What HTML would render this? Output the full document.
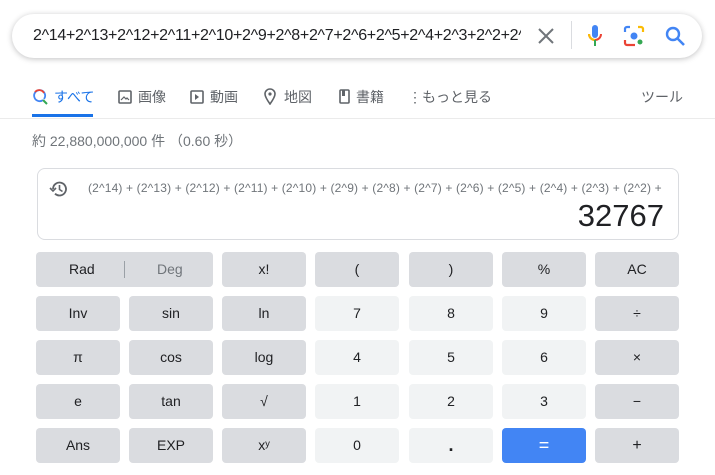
<html><head><style>
body{margin:0;width:715px;height:475px;background:#fff;font-family:"Liberation Sans","Noto Sans CJK JP",sans-serif;position:relative;overflow:hidden}
.a{position:absolute}
.sb{left:12px;top:14px;width:690px;height:44px;border-radius:22px;box-shadow:0 1px 6px rgba(32,33,36,.28);background:#fff}
.tab{top:87px;font-size:14px;color:#5f6368;line-height:20px}
.k{position:absolute;height:35px;border-radius:4px;background:#dadce0;color:#202124;font-size:14px;text-align:center;line-height:35px}
.l{background:#f1f3f4}
</style></head><body>
<div class="a sb"></div>
<div class="a" style="left:33px;top:26px;width:488px;overflow:hidden;white-space:nowrap;font-size:16px;color:#202124;line-height:20px;letter-spacing:-0.3px">2^14+2^13+2^12+2^11+2^10+2^9+2^8+2^7+2^6+2^5+2^4+2^3+2^2+2^1+2^0</div>
<svg class="a" style="left:536px;top:26px" width="20" height="20" viewBox="0 0 20 20"><path d="M3 3L17 17M17 3L3 17" stroke="#70757a" stroke-width="2"/></svg>
<div class="a" style="left:571px;top:21px;width:1px;height:28px;background:#dadce0"></div>
<svg class="a" style="left:585px;top:24px" width="20" height="24" viewBox="0 0 20 24"><rect x="7" y="1" width="6" height="13" rx="3" fill="#4285f4"/><path d="M4 10a6 6 0 0 0 12 0" stroke="#ea4335" stroke-width="2" fill="none"/><path d="M4 10a6 6 0 0 0 6 6" stroke="#fbbc05" stroke-width="2" fill="none"/><rect x="9" y="16" width="2" height="6" fill="#34a853"/></svg>
<svg class="a" style="left:623px;top:25px" width="22" height="22" viewBox="0 0 22 22"><path d="M2 7V4a2 2 0 0 1 2-2h3" stroke="#4285f4" stroke-width="2.2" fill="none"/><path d="M15 2h3a2 2 0 0 1 2 2v3" stroke="#fbbc05" stroke-width="2.2" fill="none"/><path d="M2 15v3a2 2 0 0 0 2 2h3" stroke="#ea4335" stroke-width="2.2" fill="none"/><path d="M7 20h5" stroke="#ea4335" stroke-width="2.2"/><circle cx="11" cy="11" r="3.5" fill="#4285f4"/><circle cx="17" cy="17" r="2.5" fill="#34a853"/></svg>
<svg class="a" style="left:664px;top:25px" width="22" height="22" viewBox="0 0 22 22"><circle cx="9" cy="9" r="6" stroke="#4285f4" stroke-width="2.4" fill="none"/><path d="M13.5 13.5L20 20" stroke="#4285f4" stroke-width="2.6"/></svg>
<svg class="a" style="left:32px;top:89px" width="16" height="16" viewBox="0 0 16 16"><path d="M12 10A5.5 5.5 0 1 0 11 11" stroke="#4285f4" stroke-width="1.8" fill="none"/><path d="M3 3A5.5 5.5 0 0 1 12 4" stroke="#ea4335" stroke-width="1.8" fill="none"/><path d="M11 11l4 4" stroke="#34a853" stroke-width="2"/></svg>
<div class="a tab" style="left:54px;color:#1a73e8">すべて</div>
<div class="a" style="left:32px;top:114px;width:61px;height:3px;background:#1a73e8"></div>
<svg class="a" style="left:118px;top:90px" width="14" height="14" viewBox="0 0 14 14"><rect x="1" y="1" width="12" height="12" rx="1" stroke="#5f6368" stroke-width="1.6" fill="none"/><path d="M3 10l3-3 2 2 1-1 2 2" stroke="#5f6368" stroke-width="1.2" fill="none"/></svg>
<div class="a tab" style="left:138px">画像</div>
<svg class="a" style="left:190px;top:90px" width="14" height="14" viewBox="0 0 14 14"><rect x="1" y="1" width="12" height="12" rx="1" stroke="#5f6368" stroke-width="1.6" fill="none"/><path d="M5 4v6l4-3z" fill="#5f6368"/></svg>
<div class="a tab" style="left:210px">動画</div>
<svg class="a" style="left:264px;top:88px" width="12" height="17" viewBox="0 0 12 17"><path d="M6 16C6 16 1 9 1 6a5 5 0 0 1 10 0c0 3-5 10-5 10z" stroke="#5f6368" stroke-width="1.6" fill="none"/><circle cx="6" cy="6" r="1.6" fill="#5f6368"/></svg>
<div class="a tab" style="left:284px">地図</div>
<svg class="a" style="left:339px;top:89px" width="11" height="15" viewBox="0 0 11 15"><rect x="1" y="1" width="9" height="13" rx="1" stroke="#5f6368" stroke-width="1.6" fill="none"/><rect x="3" y="1" width="3" height="6" fill="#5f6368"/></svg>
<div class="a tab" style="left:356px">書籍</div>
<div class="a tab" style="left:408px">⋮もっと見る</div>
<div class="a tab" style="left:641px">ツール</div>
<div class="a" style="left:0;top:118px;width:715px;height:1px;background:#ebebeb"></div>
<div class="a" style="left:32px;top:131px;font-size:14px;color:#70757a;line-height:20px">約 22,880,000,000 件 （0.60 秒）</div>
<div class="a" style="left:37px;top:168px;width:640px;height:70px;border:1px solid #dadce0;border-radius:8px"></div>
<svg class="a" style="left:49px;top:179px" width="20" height="20" viewBox="0 0 20 20"><path d="M4 10a6.5 6.5 0 1 1 2 4.7" stroke="#5f6368" stroke-width="1.8" fill="none"/><path d="M1 9l3 3 3-3" stroke="#5f6368" stroke-width="1.6" fill="none"/><path d="M10.5 6v4.5l3 2" stroke="#5f6368" stroke-width="1.6" fill="none"/></svg>
<div class="a" style="left:88px;top:181px;width:576px;overflow:hidden;white-space:nowrap;font-size:12px;color:#70757a;letter-spacing:0.15px">(2^14) + (2^13) + (2^12) + (2^11) + (2^10) + (2^9) + (2^8) + (2^7) + (2^6) + (2^5) + (2^4) + (2^3) + (2^2) + (2^1)</div>
<div class="a" style="right:51px;top:198px;font-size:31px;color:#202124;line-height:36px">32767</div>
<div class="k" style="left:36px;top:252px;width:177px"><span style="position:absolute;left:33px">Rad</span><span style="position:absolute;left:88px;top:9px;width:1px;height:17px;background:#9aa0a6"></span><span style="position:absolute;left:121px;color:#70757a">Deg</span></div>
<div class="k" style="left:222px;top:252px;width:84px">x!</div>
<div class="k" style="left:315px;top:252px;width:84px">(</div>
<div class="k" style="left:409px;top:252px;width:84px">)</div>
<div class="k" style="left:502px;top:252px;width:84px">%</div>
<div class="k" style="left:595px;top:252px;width:84px">AC</div>

<div class="k" style="left:36px;top:296px;width:84px">Inv</div>
<div class="k" style="left:129px;top:296px;width:84px">sin</div>
<div class="k" style="left:222px;top:296px;width:84px">ln</div>
<div class="k l" style="left:315px;top:296px;width:84px">7</div>
<div class="k l" style="left:409px;top:296px;width:84px">8</div>
<div class="k l" style="left:502px;top:296px;width:84px">9</div>
<div class="k" style="left:595px;top:296px;width:84px">÷</div>

<div class="k" style="left:36px;top:340px;width:84px">π</div>
<div class="k" style="left:129px;top:340px;width:84px">cos</div>
<div class="k" style="left:222px;top:340px;width:84px">log</div>
<div class="k l" style="left:315px;top:340px;width:84px">4</div>
<div class="k l" style="left:409px;top:340px;width:84px">5</div>
<div class="k l" style="left:502px;top:340px;width:84px">6</div>
<div class="k" style="left:595px;top:340px;width:84px">×</div>

<div class="k" style="left:36px;top:384px;width:84px">e</div>
<div class="k" style="left:129px;top:384px;width:84px">tan</div>
<div class="k" style="left:222px;top:384px;width:84px">√</div>
<div class="k l" style="left:315px;top:384px;width:84px">1</div>
<div class="k l" style="left:409px;top:384px;width:84px">2</div>
<div class="k l" style="left:502px;top:384px;width:84px">3</div>
<div class="k" style="left:595px;top:384px;width:84px">−</div>

<div class="k" style="left:36px;top:428px;width:84px">Ans</div>
<div class="k" style="left:129px;top:428px;width:84px">EXP</div>
<div class="k" style="left:222px;top:428px;width:84px">xʸ</div>
<div class="k l" style="left:315px;top:428px;width:84px">0</div>
<div class="k l" style="left:409px;top:428px;width:84px;font-weight:bold;font-size:18px">.</div>
<div class="k" style="left:502px;top:428px;width:84px;background:#4285f4;color:#fff;font-size:18px">=</div>
<div class="k" style="left:595px;top:428px;width:84px;font-size:16px">+</div>
</body></html>
